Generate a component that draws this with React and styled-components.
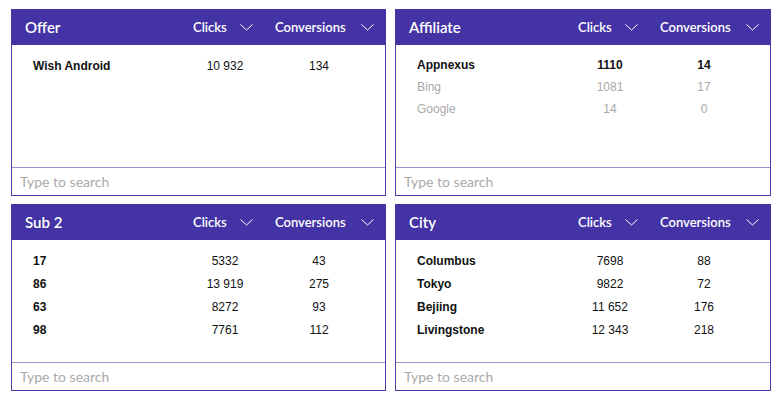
import React from "react";
import styled, { createGlobalStyle } from "styled-components";

const GlobalStyle = createGlobalStyle`
  body {
    margin: 0;
    background: #ffffff;
    font-family: Lato, "Open Sans", sans-serif;
  }
`;

const Board = styled.div`
  display: grid;
  grid-template-columns: 375px 376px;
  column-gap: 9px;
  row-gap: 8px;
  padding: 9px 0 0 11px;
`;

const Panel = styled.div`
  display: flex;
  flex-direction: column;
  height: 187px;
  border: 1px solid #4b3cab;
  box-sizing: border-box;
  background: #fff;
`;

const Header = styled.div`
  display: grid;
  grid-template-columns: 1fr 82px 111px;
  align-items: center;
  height: 36px;
  margin: -1px -1px 0;
  padding-left: 14px;
  background: #4433a5;
  color: #fff;
`;

const Title = styled.div`
  font-size: 15px;
  font-weight: 600;
`;

const Sort = styled.div`
  display: flex;
  align-items: center;
  gap: ${(p) => p.$gap}px;
  font-size: 13px;
  font-weight: 600;
`;

const Chevron = () => (
  <svg width="13" height="7" viewBox="0 0 13 7">
    <path d="M0.5 0.5 L6.5 6 L12.5 0.5" fill="none" stroke="#fff" strokeWidth="1" />
  </svg>
);

const Body = styled.div`
  flex: 1;
  padding: 9px 0 0 21px;
`;

const Row = styled.div`
  display: grid;
  grid-template-columns: 1fr 94px 94px 19px;
  align-items: center;
  height: ${(p) => p.$h}px;
  font-family: "Liberation Sans", Arial, sans-serif;
  font-size: 12px;
  color: ${(p) => (p.$muted ? "#a9a9a9" : "#111")};
`;

const Name = styled.div`
  font-weight: ${(p) => (p.$muted ? 400 : 700)};
`;

const Num = styled.div`
  text-align: center;
  font-weight: ${(p) => (p.$strong ? 700 : 400)};
`;

const Search = styled.input`
  box-sizing: border-box;
  height: 28px;
  border: none;
  border-top: 1px solid #9c92d4;
  padding: 0 8px;
  font-family: Lato, sans-serif;
  font-size: 14px;
  color: #333;
  outline: none;
  &::placeholder {
    color: #aaa;
  }
`;

const panels = [
  { title: "Offer", rowH: 23, rows: [{ n: "Wish Android", c: "10 932", v: "134" }] },
  {
    title: "Affiliate",
    rowH: 22,
    rows: [
      { n: "Appnexus", c: "1110", v: "14", strong: true },
      { n: "Bing", c: "1081", v: "17", muted: true },
      { n: "Google", c: "14", v: "0", muted: true },
    ],
  },
  {
    title: "Sub 2",
    rowH: 23,
    rows: [
      { n: "17", c: "5332", v: "43" },
      { n: "86", c: "13 919", v: "275" },
      { n: "63", c: "8272", v: "93" },
      { n: "98", c: "7761", v: "112" },
    ],
  },
  {
    title: "City",
    rowH: 23,
    rows: [
      { n: "Columbus", c: "7698", v: "88" },
      { n: "Tokyo", c: "9822", v: "72" },
      { n: "Bejiing", c: "11 652", v: "176" },
      { n: "Livingstone", c: "12 343", v: "218" },
    ],
  },
];

export default function App() {
  return (
    <>
      <GlobalStyle />
      <Board>
        {panels.map((p) => (
          <Panel key={p.title}>
            <Header>
              <Title>{p.title}</Title>
              <Sort $gap={13}>
                Clicks <Chevron />
              </Sort>
              <Sort $gap={15}>
                Conversions <Chevron />
              </Sort>
            </Header>
            <Body>
              {p.rows.map((r) => (
                <Row key={r.n} $h={p.rowH} $muted={r.muted}>
                  <Name $muted={r.muted}>{r.n}</Name>
                  <Num $strong={r.strong}>{r.c}</Num>
                  <Num $strong={r.strong}>{r.v}</Num>
                </Row>
              ))}
            </Body>
            <Search placeholder="Type to search" />
          </Panel>
        ))}
      </Board>
    </>
  );
}
